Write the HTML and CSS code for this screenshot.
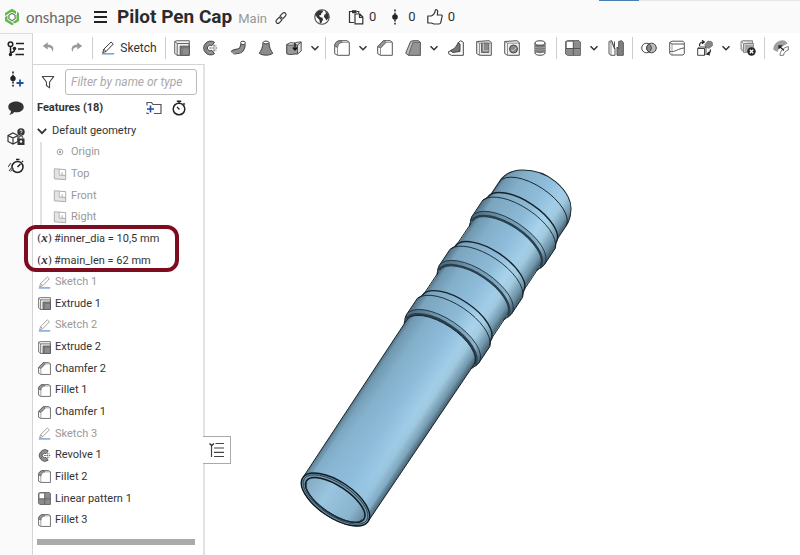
FILE: index.html
```html
<!DOCTYPE html>
<html lang="en">
<head>
<meta charset="utf-8">
<meta name="viewport" content="width=device-width, initial-scale=1">
<title>Pilot Pen Cap</title>
<link rel="stylesheet" href="styles.css">
</head>
<body>
<svg class="sprite" aria-hidden="true">
  <defs>
    <symbol id="i-undo" viewBox="0 0 16 16"><path d="M7 1.500L1 6l6 4.500V7.800c3.500-.2 5.500 1.500 5.700 5.700C16 8.500 12.500 4.500 7 4.300z" fill="#999"/></symbol>
    <symbol id="i-redo" viewBox="0 0 16 16"><path d="M9 1.500L15 6l-6 4.500V7.800c-3.500-.2-5.500 1.500-5.700 5.700C0 8.500 3.500 4.500 9 4.300z" fill="#999"/></symbol>
    <symbol id="i-sketch" viewBox="0 0 16 16"><path d="M1 14.700h14" stroke="#3b74c4" stroke-width="1.200"/><path d="M2 13.300l1.200-4L11.500 1.200l2.500 2.300-8.300 8.500zM3.200 9.300l2.500 2.700" fill="#fff" stroke="currentColor" stroke-width="1.100" stroke-linejoin="round"/></symbol>
    <symbol id="i-extrude" viewBox="0 0 16 16"><path d="M.700 1.500L3 .700h12.300v12.600M.700 1.500v12l2.500 1.800h2M.700 1.500l2.500 2h12V15.300H3.200V3.500" fill="#eee" stroke="#666"/><path d="M6.200 6.200h9.100v9.100H6.200z" fill="#8d8d8d" stroke="#555"/><path d="M6.200 6.200l1.800 1.600v7.500M8 7.800h7" fill="none" stroke="#666" stroke-width=".8"/></symbol>
    <symbol id="i-revolve" viewBox="0 0 16 16"><path d="M12.500 2.300A6.900 6.900 0 1 0 12.500 13.700L9.800 10.300A2.800 2.800 0 1 1 9.800 5.700z" fill="#939393" stroke="#444"/><path d="M8 1.300L4 3v10l4 1.700" fill="none" stroke="#666" stroke-width=".7"/><path d="M7.500 8H15M12 4.500v2M12 9.500v2M14 5.500l-1 1M14 10.500l-1-1" stroke="#444" stroke-width="1" stroke-dasharray="2 1"/></symbol>
    <symbol id="i-sweep" viewBox="0 0 16 16"><path d="M2.800 13C4 11.500 5.500 11.500 8 11.200c3-.3 4.700-2 5-7" fill="none" stroke="#444" stroke-width="5.600"/><path d="M2.500 13.300C4 11.500 5.500 11.500 8 11.200c3-.3 4.700-2 5-7.400" fill="none" stroke="#909090" stroke-width="3.800"/><ellipse cx="13" cy="2.900" rx="2.400" ry="1.700" fill="#fff" stroke="#444"/></symbol>
    <symbol id="i-loft" viewBox="0 0 16 16"><path d="M5 2.500C5 7 3 11 1.200 13.200 4 15.800 12 15.800 14.800 13.200 13 11 11 7 11 2.500z" fill="#8c8c8c" stroke="#444"/><ellipse cx="8" cy="2.500" rx="3" ry="1.400" fill="#fff" stroke="#444"/></symbol>
    <symbol id="i-thicken" viewBox="0 0 16 16"><path d="M.800 4.500l4-2c3 1.500 6-1 10.400-.5v9l-3.700 3C8 13 5 16 .800 13.500z" fill="#ddd" stroke="#555"/><path d="M.800 4.500c4 2 7-.500 10.700.5v9C8 13 5 16 .800 13.500z" fill="#999" stroke="#555"/><path d="M11.500 5l3.700-3" stroke="#444"/><path d="M9 3V9.500M6.800 7.500L9 10l2.200-2.500" fill="none" stroke="#111" stroke-width="1.300"/></symbol>
    <symbol id="i-fillet" viewBox="0 0 16 16"><path d="M3.500 15.300L.700 13.700V6.200C.700 3 3 .700 6.200.700H13l2.300 1.600v13z" fill="#fff" stroke="#555" stroke-linejoin="round"/><path d="M.700 6.200C.700 3 3 .700 6.200.700l2.300 1.600C5.500 2.300 3.500 4.500 3.500 7.500z" fill="#999" stroke="#555" stroke-width=".8"/><path d="M3.500 15V7.500c0-3 2-5.200 5-5.200h6.800" fill="none" stroke="#777" stroke-width=".8"/></symbol>
    <symbol id="i-chamfer" viewBox="0 0 16 16"><path d="M3.500 15.300L.700 13.700V6.700l5.800-6H13l2.300 1.600v13z" fill="#fff" stroke="#555" stroke-linejoin="round"/><path d="M.700 6.700l5.800-6L9 2.300 3.500 8z" fill="#999" stroke="#555" stroke-width=".8"/><path d="M3.500 15V8L9 2.300h6.300" fill="none" stroke="#777" stroke-width=".8"/></symbol>
    <symbol id="i-draft" viewBox="0 0 16 16"><path d="M.700 13.200L5.500 1.500 8 .700h5.500l1.800 1.600v13H3.500z" fill="#bbb" stroke="#555"/><path d="M3.500 15.300L8 2.300h7.300v13z" fill="#949494" stroke="#666"/></symbol>
    <symbol id="i-rib" viewBox="0 0 16 16"><path d="M.700 11.500l10-2.500V2.500L12.500.700l2.800 1.600v13H3.500L.700 13.800z" fill="#fff" stroke="#444"/><path d="M2.500 10.500C7 8.500 9 6 10 2.500l2 1.500v7.500l-7.500 1z" fill="#777" stroke="#444"/></symbol>
    <symbol id="i-shell" viewBox="0 0 16 16"><path d="M.700 1.500L13 .700l2.300 1.800v12.800H3.500L.700 13.500z" fill="#eee" stroke="#555"/><path d="M3.500 15V3.200L.700 1.500M3.500 3.200h11.800" fill="none" stroke="#777" stroke-width=".8"/><path d="M5.500 3.200h7.300v9.300H5.500z" fill="#8a8a8a" stroke="#666"/><path d="M7.500 3.200v7.500h5" fill="none" stroke="#ccc" stroke-width=".8"/></symbol>
    <symbol id="i-hole" viewBox="0 0 16 16"><path d="M.700 1.500L13 .700l2.300 1.800v12.800H3.500L.700 13.500z" fill="#f2f2f2" stroke="#555"/><path d="M3.500 15V3.200L.700 1.500M3.500 3.200h11.800" fill="none" stroke="#777" stroke-width=".8"/><circle cx="9.500" cy="9" r="4" fill="#888" stroke="#444"/><path d="M7.500 10c2 1 3.800 0 4.500-2.500" fill="none" stroke="#ccc"/></symbol>
    <symbol id="i-thread" viewBox="0 0 16 16"><path d="M3 3v10c0 3 10 3 10 0V3" fill="#fff" stroke="#444"/><path d="M3 4.500h10v7.500c-1 1.500-9 1.500-10 0z" fill="#777"/><ellipse cx="8" cy="3" rx="5" ry="2.200" fill="#fff" stroke="#444"/><path d="M3 7c2 1.200 8 1.200 10 0M3 9.300c2 1.200 8 1.200 10 0" fill="none" stroke="#bbb" stroke-width=".6"/></symbol>
    <symbol id="i-pattern" viewBox="0 0 16 16"><path d="M.700 1.500L2.500.700H14l1.300 1.500v13.100H2.500L.700 14z" fill="#999" stroke="#555"/><path d="M2 2h6v6H2z" fill="#fff"/><path d="M9 2.500h5.800V8H9zM2 9.200h6v5.600H2zM9 9.200h5.800v5.600H9z" fill="#8c8c8c"/><path d="M8.300 1v14.300M.700 8.500h14.600" stroke="#555"/></symbol>
    <symbol id="i-mirror" viewBox="0 0 16 16"><path d="M1 1.500L3.500.700 6.500 9V1.500M1 1.500v12.300l2 1.500h4V8.500L3.500.700" fill="#fff" stroke="#555"/><path d="M3 15V3L1 1.500" fill="none" stroke="#777" stroke-width=".8"/><path d="M15.300 2.500L13.500.700l-2.800.8v7.300L9 7v8.300h6.300z" fill="#808080" stroke="#555"/></symbol>
    <symbol id="i-boolean" viewBox="0 0 16 16"><circle cx="5.500" cy="8" r="4.800" fill="#fff" stroke="#444"/><circle cx="10.500" cy="8" r="4.800" fill="#bbb" stroke="#444"/><path d="M8 3.900a4.800 4.800 0 0 1 0 8.200 4.800 4.800 0 0 1 0-8.200z" fill="#888" stroke="#444"/></symbol>
    <symbol id="i-split" viewBox="0 0 16 16"><path d="M.700 2.500L3 1.200h11l1.300 1.500v11L14 15H2.500L.700 13.500z" fill="#fff" stroke="#555"/><path d="M.700 2.500L3 4h12M1 11.500c5 1 8-3 14-3.500" fill="none" stroke="#555"/><path d="M3 4v7M3 13v2" stroke="#777" stroke-width=".7"/></symbol>
    <symbol id="i-transform" viewBox="0 0 16 16"><path d="M.700 8.500L2.200 7H9v6.500l-1.500 1.800H.700z" fill="#fff" stroke="#444"/><path d="M.700 8.500h6.800v6.800M7.500 8.500L9 7" fill="none" stroke="#444"/><path d="M8 4.500L11 1l4 1 .5 3.500L12 8.300 8.500 7z" fill="#888" stroke="#777"/><path d="M2.500 6C2.500 3 4 2 6 2M5 .300L7.300 2 5 3.800M13.500 9.500c0 3-1 4-2.500 4.500M12.300 11.800L10 14.200l3 .8" fill="none" stroke="#222" stroke-width="1.200"/></symbol>
    <symbol id="i-delete" viewBox="0 0 16 16"><path d="M1 1.500L3 .700h9.500v3M1 1.500v8l2.500 2M1 1.500l2.500 2h10v9H3.500v-9" fill="#ccc" stroke="#888"/><path d="M5 5h8.500v8H5z" fill="#a5a5a5"/><circle cx="11.500" cy="11.500" r="4.200" fill="#222"/><path d="M9.800 9.800l3.400 3.400M13.200 9.800l-3.400 3.400" stroke="#fff" stroke-width="1.300"/></symbol>
    <symbol id="i-modify" viewBox="0 0 16 16"><path d="M.700 9.500C.700 4.500 4.500 .700 9.500.700 12 .700 13 1.500 14 3.500L9 6 6 6.500 4.500 11.500z" fill="#a0a0a0" stroke="#888" stroke-width=".6"/><path d="M7 15.300c0-4 3-7.500 8.300-8.800v3.500C12 11 11 13 10.500 15.300z" fill="#fff" stroke="#777"/><path d="M6 6l5 4.500M6 9V5.800h3.500" fill="none" stroke="#222" stroke-width="1.200"/></symbol>
    <symbol id="i-chev" viewBox="0 0 10 10"><path d="M1.500 3.300L5 6.800l3.500-3.500" fill="none" stroke="currentColor" stroke-width="1.500"/></symbol>
    <symbol id="i-plane" viewBox="0 0 16 16"><path d="M1.500 2.500h5v7h8v4.500l-13-.5z" fill="#e4e4e4"/><path d="M1.500 2l13 1v11.500l-13-1zM7 2.500v6.700l7.500.5M10.500 6v3.500" fill="none" stroke="#aaa" stroke-width="1.100"/></symbol>
    <symbol id="i-origin" viewBox="0 0 16 16"><circle cx="8" cy="8" r="3.300" fill="none" stroke="#999"/><circle cx="8" cy="8" r="1.300" fill="#999"/></symbol>
    <symbol id="i-logo" viewBox="0 0 20 22"><path d="M10 1l8.500 5v10L10 21l-8.500-5V6z" fill="#5fb946"/><path d="M10 4.500l5.500 3.200v6.600L10 17.500l-5.500-3.200V7.700z" fill="#fff"/><path d="M10 6.500l3.800 2.300v4.400L10 15.500l-3.800-2.300V8.800z" fill="none" stroke="#56705a" stroke-width="1.300"/><path d="M1.500 10.500L5.500 8M10 17.500l4 2.200M15.500 8V4" stroke="#fff" stroke-width="1.200"/></symbol>
    <symbol id="i-link" viewBox="0 0 16 16"><g fill="none" stroke="#333" stroke-width="1.300" stroke-linecap="round"><path d="M7 5.500l3-3c2-2 5 1 3.200 3L10.500 8.500C9.500 9.500 8 9.500 7 8.500"/><path d="M9 10.500l-3 3c-2 2-5-1-3.200-3L5.500 7.500C6.500 6.500 8 6.500 9 7.500"/></g></symbol>
    <symbol id="i-globe" viewBox="0 0 16 16"><circle cx="8" cy="8" r="7.200" fill="#fff" stroke="#444" stroke-width="1.100"/><path d="M2 4.500C4 1.500 6 1 8.500 1.200L9 3 7.500 4l-.5 2-2 .5 1 1.500 2.500.8.500 2L7 14.500l-1.200-.5L5.500 11 3 8.500 1.500 6zM11 1.800l3 3 1 3.700-2.500 3-1.500-2.500L9.800 8l.7-2.500 1.500-.5z" fill="#333"/></symbol>
    <symbol id="i-copy" viewBox="0 0 16 16"><path d="M6 13.500H1.500v-11H4M8.500 2.500h2.200v2" fill="none" stroke="#333" stroke-width="1.200"/><path d="M4 1.200h4.500v3H4z" fill="#333"/><path d="M7 5h5l2.800 3v6.800H7zM11.500 5v3.300h3.300" fill="#fff" stroke="#333" stroke-width="1.200"/></symbol>
    <symbol id="i-version" viewBox="0 0 16 16"><path d="M8 .500v15" stroke="#222" stroke-width="1.500" stroke-dasharray="2 1.300"/><circle cx="8" cy="8" r="2.800" fill="#222"/></symbol>
    <symbol id="i-thumb" viewBox="0 0 16 16"><path d="M.800 7h3.500C6.500 6 8 4.500 8.200 1.500c.2-1.400 2.500-1 2.500 1L10.300 6h4c1.200 0 1 1.500.5 2.500l-1 4.800c-.3 1.200-.8 1.700-2 1.700H7L4.300 14H.800z" fill="#fff" stroke="#333" stroke-width="1.200" stroke-linejoin="round"/></symbol>
    <symbol id="i-tree" viewBox="0 0 18 16"><g fill="none" stroke="#222" stroke-width="1.500"><circle cx="3.500" cy="3.200" r="2.300"/><path d="M3.500 5.500V15M3.500 11.500C7 11.500 7.500 10 7.500 8.500M9 2.500h8M11 8h6M8.500 13.500H17"/></g><circle cx="7.500" cy="7.500" r="1.800" fill="#222"/><circle cx="3.500" cy="13.500" r="1.700" fill="#222"/></symbol>
    <symbol id="i-addversion" viewBox="0 0 16 16"><path d="M5 .500v15" stroke="#222" stroke-width="1.600" stroke-dasharray="2 1.300"/><circle cx="5" cy="7.500" r="2.700" fill="#222"/><path d="M12 8.500v7M8.500 12h7" stroke="#1d4fa8" stroke-width="1.800"/></symbol>
    <symbol id="i-comment" viewBox="0 0 16 16"><path d="M8 1.500c4.500 0 7.700 2.300 7.700 5.500s-3.200 5.300-7.200 5.300c-1 0-1.500 0-2.300-.3C5 14 3 14.500 1.200 14.500 2.500 13.500 3 12.500 3 11 1.200 10 .300 8.700.300 7 .300 3.800 3.500 1.500 8 1.500z" fill="#333"/></symbol>
    <symbol id="i-parts" viewBox="0 0 18 18"><path d="M1 7.500L6 5l5 2.500v6L6 16l-5-2.500zM1 7.500L6 10l5-2.500M6 10v6" fill="#fff" stroke="#333" stroke-width="1.200"/><circle cx="14" cy="4" r="3.700" fill="#333"/><path d="M12.800 3.300c0-1.700 2.500-1.500 2.300 0-.1.800-1.100.8-1.100 1.700M14 5.800v.8" fill="none" stroke="#fff" stroke-width=".9"/><path d="M10.500 10.500h7V17h-7z" fill="#333"/><path d="M12.200 10.500V9.300c0-1.800 3.600-1.800 3.600 0v1.200" fill="none" stroke="#333"/><circle cx="14" cy="13.500" r="1.200" fill="#fff"/></symbol>
    <symbol id="i-speed" viewBox="0 0 16 16"><circle cx="9.500" cy="9" r="5.500" fill="none" stroke="#222" stroke-width="1.500"/><path d="M8 1.500h3.500M9.500 9l3-3M14 3l1 1" stroke="#222" stroke-width="1.500"/><path d="M3 5L0 9M4 9l-3 4M5.500 10l-3 3.500" stroke="#555" stroke-width="1.100"/></symbol>
    <symbol id="i-clock" viewBox="0 0 16 16"><circle cx="8" cy="9" r="5.800" fill="none" stroke="#222" stroke-width="1.500"/><path d="M5.800 1.200h4.400M8 1v2M6 7l2.500 2.500M12.500 3.200l1.200 1.200" stroke="#222" stroke-width="1.400"/></symbol>
    <symbol id="i-filter" viewBox="0 0 16 16"><path d="M1.500 1.800h13L9.800 8v6.700L6.200 12V8z" fill="none" stroke="#444" stroke-width="1.200" stroke-linejoin="round"/></symbol>
    <symbol id="i-folder" viewBox="0 0 16 14"><path d="M1 4.500V1.500h4.500l1.500 2h8v9H8M1 11.500v1h2" fill="none" stroke="#555" stroke-width="1.200"/><path d="M4.500 4.500v7M1 8h7" stroke="#1d4fa8" stroke-width="1.600"/></symbol>
    <symbol id="i-list" viewBox="0 0 16 16"><path d="M6.500 1.500H15M5 6h10M5 10.300h10M5 14.500h10M2.500 4v11" stroke="#444" stroke-width="1.200" fill="none"/><path d="M.500 1.500l2.200 2 2.200-2" stroke="#333" stroke-width="1.500" fill="none"/></symbol>
  </defs>
</svg>

<div class="app">
  <header class="header">
    <div class="progress"></div>
    <a class="brand" href="#"><svg class="logo"><use href="#i-logo"/></svg><span>onshape</span></a>
    <button class="menu" type="button" aria-label="Menu"><i></i><i></i><i></i></button>
    <h1 class="title">Pilot Pen Cap</h1>
    <span class="branch">Main</span>
    <button class="link" type="button" aria-label="Link"><svg class="ic14"><use href="#i-link"/></svg></button>
    <svg class="ic16"><use href="#i-globe"/></svg>
    <div class="stats">
      <span class="stat"><svg class="ic16"><use href="#i-copy"/></svg>0</span>
      <span class="stat"><svg class="ic16"><use href="#i-version"/></svg>0</span>
      <span class="stat"><svg class="ic16"><use href="#i-thumb"/></svg>0</span>
    </div>
  </header>

  <nav class="rail" aria-label="Panels">
    <button class="rail-top" type="button" aria-label="Feature list"><svg class="ic18"><use href="#i-tree"/></svg></button>
    <button type="button" aria-label="Versions"><svg class="ic16"><use href="#i-addversion"/></svg></button>
    <button type="button" aria-label="Comments"><svg class="ic16"><use href="#i-comment"/></svg></button>
    <button type="button" aria-label="Parts"><svg class="ic18"><use href="#i-parts"/></svg></button>
    <button type="button" aria-label="Performance"><svg class="ic16"><use href="#i-speed"/></svg></button>
  </nav>

  <div class="toolbar" role="toolbar">
    <button class="tool" type="button" aria-label="Undo"><svg class="ic13"><use href="#i-undo"/></svg></button>
    <button class="tool" type="button" aria-label="Redo"><svg class="ic13"><use href="#i-redo"/></svg></button>
    <span class="sep"></span>
    <button class="tool sketch" type="button"><svg class="ic14"><use href="#i-sketch"/></svg>Sketch</button>
    <span class="sep"></span>
    <button class="tool" type="button" aria-label="Extrude"><svg class="ic16"><use href="#i-extrude"/></svg></button>
    <button class="tool" type="button" aria-label="Revolve"><svg class="ic16"><use href="#i-revolve"/></svg></button>
    <button class="tool" type="button" aria-label="Sweep"><svg class="ic16"><use href="#i-sweep"/></svg></button>
    <button class="tool" type="button" aria-label="Loft"><svg class="ic16"><use href="#i-loft"/></svg></button>
    <button class="tool" type="button" aria-label="Thicken"><svg class="ic16"><use href="#i-thicken"/></svg></button>
    <button class="more" type="button" aria-label="More solids"><svg class="ic10"><use href="#i-chev"/></svg></button>
    <span class="sep"></span>
    <button class="tool" type="button" aria-label="Fillet"><svg class="ic16"><use href="#i-fillet"/></svg></button>
    <button class="more" type="button" aria-label="More fillets"><svg class="ic10"><use href="#i-chev"/></svg></button>
    <button class="tool" type="button" aria-label="Chamfer"><svg class="ic16"><use href="#i-chamfer"/></svg></button>
    <button class="tool" type="button" aria-label="Draft"><svg class="ic16"><use href="#i-draft"/></svg></button>
    <button class="more" type="button" aria-label="More drafts"><svg class="ic10"><use href="#i-chev"/></svg></button>
    <button class="tool" type="button" aria-label="Rib"><svg class="ic16"><use href="#i-rib"/></svg></button>
    <button class="tool" type="button" aria-label="Shell"><svg class="ic16"><use href="#i-shell"/></svg></button>
    <button class="tool" type="button" aria-label="Hole"><svg class="ic16"><use href="#i-hole"/></svg></button>
    <button class="tool" type="button" aria-label="Thread"><svg class="ic16"><use href="#i-thread"/></svg></button>
    <span class="sep"></span>
    <button class="tool" type="button" aria-label="Linear pattern"><svg class="ic16"><use href="#i-pattern"/></svg></button>
    <button class="more" type="button" aria-label="More patterns"><svg class="ic10"><use href="#i-chev"/></svg></button>
    <button class="tool" type="button" aria-label="Mirror"><svg class="ic16"><use href="#i-mirror"/></svg></button>
    <span class="sep"></span>
    <button class="tool" type="button" aria-label="Boolean"><svg class="ic16"><use href="#i-boolean"/></svg></button>
    <button class="tool" type="button" aria-label="Split"><svg class="ic16"><use href="#i-split"/></svg></button>
    <button class="tool" type="button" aria-label="Transform"><svg class="ic16"><use href="#i-transform"/></svg></button>
    <button class="more" type="button" aria-label="More transforms"><svg class="ic10"><use href="#i-chev"/></svg></button>
    <button class="tool" type="button" aria-label="Delete part"><svg class="ic16"><use href="#i-delete"/></svg></button>
    <span class="sep"></span>
    <button class="tool" type="button" aria-label="Modify fillet"><svg class="ic16"><use href="#i-modify"/></svg></button>
  </div>

  <aside class="panel">
    <div class="filter">
      <svg class="ic14"><use href="#i-filter"/></svg>
      <input type="text" aria-label="Filter features" placeholder="Filter by name or type">
    </div>
    <div class="features-head">
      <h2>Features (18)</h2>
      <button type="button" aria-label="New folder"><svg class="ic16"><use href="#i-folder"/></svg></button>
      <button type="button" aria-label="Regeneration times"><svg class="ic16"><use href="#i-clock"/></svg></button>
    </div>
    <ul class="features">
      <li class="group"><svg class="ic12"><use href="#i-chev"/></svg>Default geometry</li>
      <li class="child"><svg class="ic14"><use href="#i-origin"/></svg>Origin</li>
      <li class="child"><svg class="ic14"><use href="#i-plane"/></svg>Top</li>
      <li class="child"><svg class="ic14"><use href="#i-plane"/></svg>Front</li>
      <li class="child"><svg class="ic14"><use href="#i-plane"/></svg>Right</li>
      <li class="variable"><span class="var">(<b>x</b>)</span>#inner_dia = 10,5 mm<span class="callout"></span></li>
      <li class="variable"><span class="var">(<b>x</b>)</span>#main_len = 62 mm</li>
      <li class="muted"><svg class="ic13"><use href="#i-sketch"/></svg>Sketch 1</li>
      <li><svg class="ic13"><use href="#i-extrude"/></svg>Extrude 1</li>
      <li class="muted"><svg class="ic13"><use href="#i-sketch"/></svg>Sketch 2</li>
      <li><svg class="ic13"><use href="#i-extrude"/></svg>Extrude 2</li>
      <li><svg class="ic13"><use href="#i-chamfer"/></svg>Chamfer 2</li>
      <li><svg class="ic13"><use href="#i-fillet"/></svg>Fillet 1</li>
      <li><svg class="ic13"><use href="#i-chamfer"/></svg>Chamfer 1</li>
      <li class="muted"><svg class="ic13"><use href="#i-sketch"/></svg>Sketch 3</li>
      <li><svg class="ic13"><use href="#i-revolve"/></svg>Revolve 1</li>
      <li><svg class="ic13"><use href="#i-fillet"/></svg>Fillet 2</li>
      <li><svg class="ic13"><use href="#i-pattern"/></svg>Linear pattern 1</li>
      <li><svg class="ic13"><use href="#i-fillet"/></svg>Fillet 3</li>
    </ul>
    <div class="rollback"></div>
    <button class="flyout" type="button" aria-label="Toggle list"><svg class="ic16"><use href="#i-list"/></svg></button>
  </aside>

  <main class="canvas">
    <svg class="model" viewBox="205 64 595 491" preserveAspectRatio="xMinYMin meet" role="img" aria-label="Pen cap model">
      <defs>
        <linearGradient id="body" gradientUnits="userSpaceOnUse" x1="-41" y1="0" x2="41" y2="0">
          <stop offset="0" stop-color="#4f6d80"/><stop offset=".06" stop-color="#7199b1"/><stop offset=".22" stop-color="#83afca"/><stop offset=".5" stop-color="#8ebcda"/><stop offset=".72" stop-color="#a2cde8"/><stop offset=".8" stop-color="#a0c9e0"/><stop offset=".92" stop-color="#7298ad"/><stop offset="1" stop-color="#3d5564"/>
        </linearGradient>
        <linearGradient id="ring" gradientUnits="userSpaceOnUse" x1="-44" y1="0" x2="44" y2="0">
          <stop offset="0" stop-color="#4f6d80"/><stop offset=".1" stop-color="#7ba5be"/><stop offset=".5" stop-color="#8dbbd8"/><stop offset=".7" stop-color="#a9d3ec"/><stop offset=".8" stop-color="#a3cbe0"/><stop offset=".92" stop-color="#6f94a9"/><stop offset="1" stop-color="#3d5564"/>
        </linearGradient>
        <linearGradient id="lip" gradientUnits="userSpaceOnUse" x1="-44" y1="0" x2="44" y2="0">
          <stop offset="0" stop-color="#4b6878"/><stop offset=".3" stop-color="#6f98b0"/><stop offset=".6" stop-color="#7aa5be"/><stop offset=".85" stop-color="#8db5cb"/><stop offset="1" stop-color="#3c5361"/>
        </linearGradient>
        <linearGradient id="near" x1="0" y1="0" x2="0" y2="1">
          <stop offset="0" stop-color="#8dbddc" stop-opacity="0"/><stop offset="1" stop-color="#8dbddc" stop-opacity=".6"/>
        </linearGradient>
        <linearGradient id="bore" x1="0" y1="0" x2="1" y2="0">
          <stop offset="0" stop-color="#83a9c0"/><stop offset=".35" stop-color="#99c5e0"/><stop offset=".8" stop-color="#8ab5cf"/><stop offset="1" stop-color="#66889c"/>
        </linearGradient>
        <g id="band" stroke="#16222b">
          <path d="M-41-27A41 18.500 0 0 1 41-27V0H-41z" fill="url(#ring)" stroke-width="1.400"/>
          <path d="M-41-27L-43.500-22V-2A43.500 19.500 0 0 0 43.500-2V-22L41-27" fill="url(#ring)" stroke-width=".9"/>
          <path d="M-43-22.500A43.500 19.500 0 0 1 43-22.500" fill="none" stroke-width=".8"/>
          <path d="M-43.500-2.500A43.500 19.500 0 0 1 43.500-2.500L42 1.500A42 19 0 0 1-42 1.500z" fill="url(#lip)" stroke="#1d2d38" stroke-width=".8"/>
        </g>
        <g id="step">
          <path d="M-41 1.500A41 18.700 0 0 1 41 1.500" fill="none" stroke="#2a3f4d" stroke-width="2.600"/>
        </g>
      </defs>
      <g transform="translate(335.500 499.500) rotate(33.700)">
        <path d="M-40-325V-356C-40-364-37-371-28-377.500C-17-385-4-388 7-386.500C21-385 32-379 36-370C39-365 40-361 40-356V-325z" fill="url(#body)" stroke="#1b2932" stroke-width="1"/>
        <path d="M-40-355A40 18.500 0 0 1 40-355" fill="none" stroke="#1b2932" stroke-width=".9"/>
        <use href="#band" y="-309"/>
        <use href="#step" y="-309"/>
        <path d="M-40-307A40 18 0 0 1 40-307V-265H-40z" fill="url(#body)"/>
        <path d="M-40.500-305V-276M40.500-305V-276" stroke="#16222b" stroke-width=".9"/>
        <use href="#band" y="-250"/>
        <use href="#step" y="-250"/>
        <path d="M-40-248A40 18 0 0 1 40-248V-206H-40z" fill="url(#body)"/>
        <path d="M-40.500-246V-217M40.500-246V-217" stroke="#16222b" stroke-width=".9"/>
        <use href="#band" y="-191"/>
        <use href="#step" y="-191"/>
        <path d="M-40.300-189A40.300 18 0 0 1 40.300-189L39.300 0A39.300 18 0 0 1-39.300 0z" fill="url(#body)" stroke="#16222b" stroke-width=".9"/>
        <path d="M-34-120H34V0H-34z" fill="url(#near)"/>
        <ellipse cx="0" cy="0" rx="39.300" ry="18" fill="#7299af" stroke="#101a21" stroke-width="1.400"/>
        <ellipse cx="0" cy="0" rx="37.500" ry="16" fill="none" stroke="#22333f" stroke-width=".8"/>
        <ellipse cx="0" cy=".500" rx="34.500" ry="14" fill="url(#bore)" stroke="#101a21" stroke-width="1.500"/>
        <path d="M-33 2A33 12.500 0 0 0 33 2" fill="none" stroke="#22333f" stroke-width=".8"/>
      </g>
    </svg>
  </main>
</div>
</body>
</html>
```
FILE: styles.css
```css
* { box-sizing: border-box; }
body {
  margin: 0;
  background: #fff;
  color: #333;
  font: 12px/16px Roboto, "Liberation Sans", sans-serif;
}
button {
  display: flex;
  align-items: center;
  justify-content: center;
  padding: 0;
  border: 0;
  background: none;
  color: inherit;
  font: inherit;
}
svg { display: block; flex: none; }
.sprite { position: absolute; width: 0; height: 0; }
.ic10 { width: 10px; height: 10px; }
.ic12 { width: 12px; height: 12px; }
.ic13 { width: 13px; height: 13px; }
.ic14 { width: 14px; height: 14px; }
.ic16 { width: 16px; height: 16px; }
.ic18 { width: 18px; height: 18px; }

.app {
  display: grid;
  grid-template-columns: 33px 172px minmax(0, 1fr);
  grid-template-rows: 33px 31px minmax(0, 1fr);
  min-height: 100vh;
}

.header {
  grid-column: 1 / -1;
  position: relative;
  display: flex;
  align-items: center;
  padding: 1px 3px 0;
  background: #fafafa;
}
.progress {
  position: absolute;
  top: 0;
  right: 0;
  width: 201px;
  height: 1px;
  border-left: 40px solid #4a7fb0;
  background: #e4e6e8;
}
.brand {
  display: flex;
  align-items: center;
  gap: 5px;
  width: 91px;
  color: #666;
  font: 15px/20px Lato, sans-serif;
  text-decoration: none;
}
.logo { width: 18px; height: 18px; }
.menu {
  flex-direction: column;
  gap: 3px;
  width: 13px;
}
.menu i { width: 13px; height: 2px; background: #222; }
.title {
  margin: 0 0 0 10px;
  color: #2b2b2b;
  font-size: 19px;
  line-height: 22px;
  font-weight: 700;
}
.branch { margin-left: 6px; padding-top: 4px; color: #999; font-size: 13px; }
.link { margin: 2px 0 0 7px; }
.link + svg { margin-left: 26px; }
.stats { display: flex; gap: 12px; margin-left: 18px; }
.stat { display: flex; align-items: center; gap: 5px; font-size: 13px; }
.stat + .stat { margin-left: -1px; }

.rail {
  grid-row: 2 / 4;
  display: flex;
  flex-direction: column;
  border-top: 1px solid #ddd;
  border-right: 1px solid #d4d4d4;
  background: #fafafa;
}
.rail button { height: 29px; }
.rail .rail-top { height: 30px; }

.toolbar {
  grid-column: 2 / 4;
  display: flex;
  align-items: center;
  padding: 0 0 2px 1px;
  background: #fff;
  overflow: hidden;
}
.tool { flex: none; width: 28px; height: 28px; }
.sketch { width: 68px; gap: 5px; font-size: 12px; }
.more { flex: none; width: 16px; height: 28px; margin-left: -1px; }
.sep { flex: none; width: 1px; height: 22px; margin: 0 2px; background: #ccc; }

.panel {
  grid-column: 2;
  position: relative;
  padding: 4px 6px 0 4px;
  border-top: 1px solid #d4d4d4;
  border-right: 2px solid #e2e2e2;
  font-size: 11px;
}
.filter { display: flex; align-items: center; gap: 10px; padding-left: 4px; }
.filter input {
  flex: 1;
  min-width: 0;
  height: 26px;
  padding: 0 5px;
  border: 1px solid #bbb;
  border-radius: 3px;
  font: italic 12px/16px Roboto, sans-serif;
}
.filter input::placeholder { color: #aaa; opacity: 1; }
.features-head {
  display: flex;
  align-items: center;
  gap: 9px;
  height: 25px;
  padding-right: 10px;
}
.features-head h2 { flex: 1; margin: 0; font-size: 11px; line-height: 16px; font-weight: 700; }
.features {
  position: relative;
  display: grid;
  grid-auto-rows: 1fr;
  height: 411px;
  margin: 0;
  padding: 0;
  list-style: none;
}
.features::before {
  content: "";
  position: absolute;
  left: 3px;
  top: 22px;
  width: 2px;
  height: 84px;
  background: #e2e2e2;
}
.features li { display: flex; align-items: center; gap: 4px; padding-left: 1px; }
.features .group { gap: 4px; padding-left: 0; }
.features .group svg { margin-left: -1px; }
.features .child { padding-left: 16px; color: #999; }
.features .muted { color: #999; }
.features .variable { position: relative; gap: 2px; padding-left: 0; }
.var { font: 11px/14px "DejaVu Serif", serif; }
.var b { font: italic bold 13px/14px "Liberation Serif", serif; }
.callout {
  position: absolute;
  left: -13px;
  top: -3px;
  width: 155px;
  height: 47px;
  border: 4px solid #7d0c20;
  border-radius: 12px;
}
.rollback { height: 6px; margin: 8px 2px 0 0; background: #aaa; }
.flyout {
  position: absolute;
  left: 170px;
  top: 371px;
  width: 28px;
  height: 28px;
  border: 1px solid #aaa;
  border-left: 0;
  background: #fff;
}
.canvas { grid-column: 3; overflow: hidden; }
.model { width: 100%; height: auto; }
```
